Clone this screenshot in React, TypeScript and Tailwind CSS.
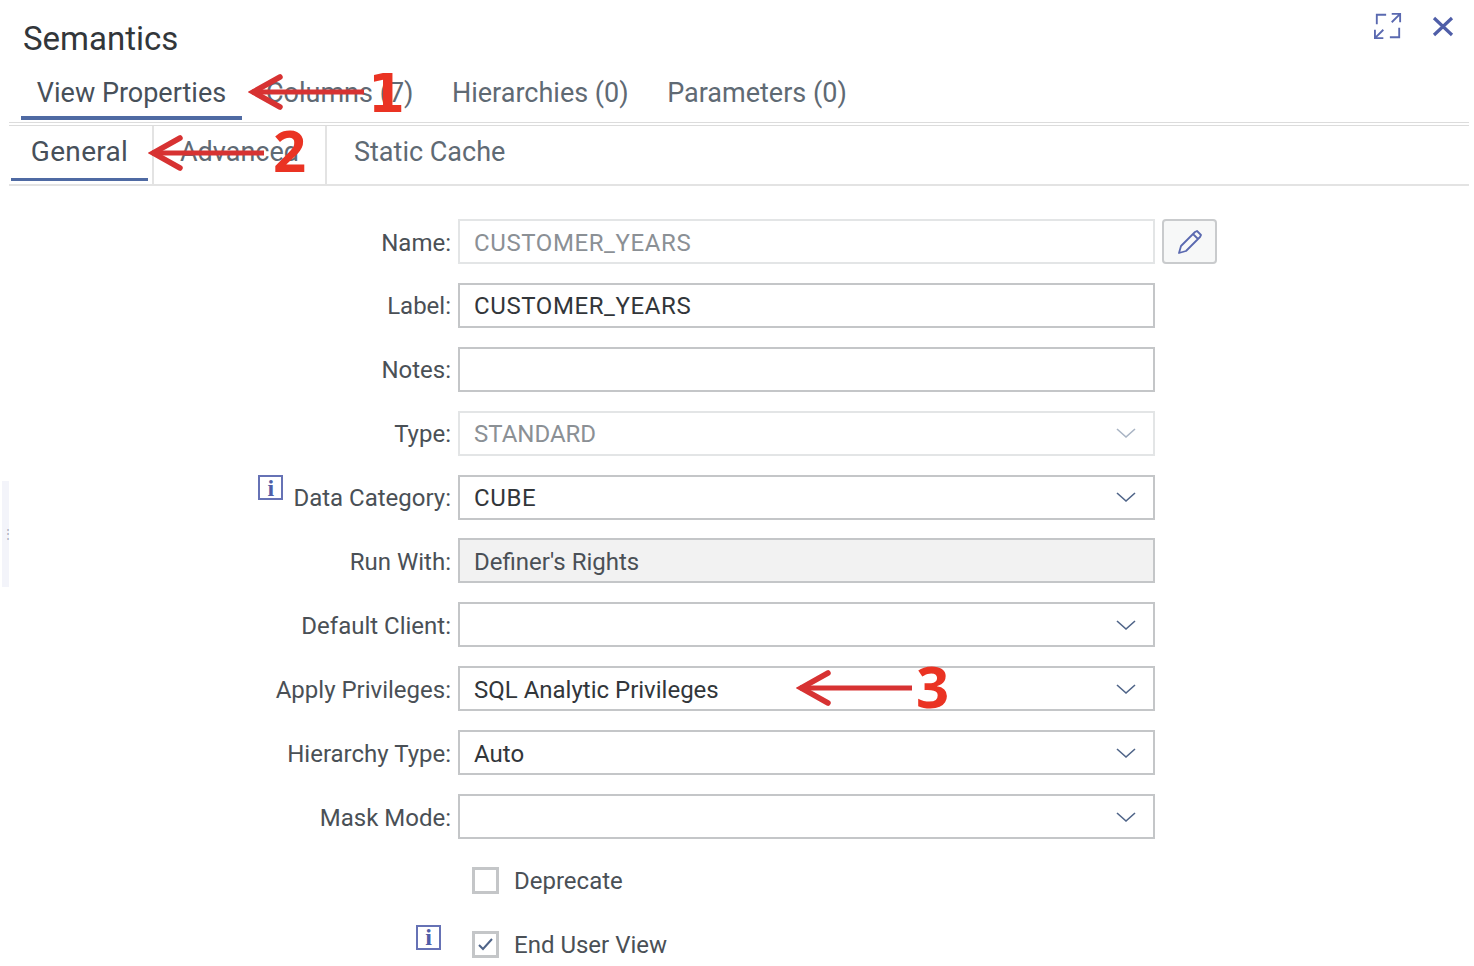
const font = "font-['Roboto',sans-serif]";

function Chevron({ faded }: { faded?: boolean }) {
  return (
    <svg width="22" height="12" viewBox="0 0 22 12" fill="none" className="shrink-0">
      <path d="M2 2 L11 10 L20 2" stroke={faded ? "#a9b4c4" : "#4f6488"} strokeWidth="1.6" />
    </svg>
  );
}

function InfoIcon() {
  return (
    <span className="flex h-[25px] w-[25px] shrink-0 items-center justify-center border-2 border-[#6672b5] font-['Liberation_Serif',serif] text-[24px] leading-none font-bold text-[#4f5ea8]">
      i
    </span>
  );
}

function Arrow({ x, y }: { x: number; y: number }) {
  return (
    <svg
      width="122"
      height="40"
      viewBox="0 0 122 40"
      fill="none"
      className="pointer-events-none absolute"
      style={{ left: x, top: y }}
    >
      <path d="M4 20 H116" stroke="#d73232" strokeWidth="5" />
      <path d="M32 5 L5 20 L32 35" stroke="#d73232" strokeWidth="5.5" strokeLinecap="round" strokeLinejoin="miter" />
    </svg>
  );
}

interface RowProps {
  label: string;
  value?: string;
  kind?: "plain" | "disabled" | "readonly";
  select?: boolean;
  info?: boolean;
  edit?: boolean;
  wide?: boolean;
}

function Row({ label, value, kind = "plain", select, info, edit, wide }: RowProps) {
  const box =
    kind === "disabled"
      ? "border-[#e3e5e6] text-[#8b9095] bg-white"
      : kind === "readonly"
        ? "border-[#c4c6c8] text-[#4a5056] bg-[#f2f2f2]"
        : "border-[#c4c6c8] text-[#32363a] bg-white";
  return (
    <div className="flex h-[45px] items-center">
      <div className="flex w-[451px] shrink-0 justify-end pt-[2px] text-[24px] text-[#4a5056]">
        {info && (
          <span className="mt-[-5px] mr-[10px]">
            <InfoIcon />
          </span>
        )}
        <span>{label}</span>
      </div>
      <div
        className={`ml-[7px] flex h-full w-[697px] shrink-0 items-center justify-between border-2 pr-[16px] pl-[14px] text-[24px] ${box}`}
      >
        <span className={`pt-[2px] ${wide ? "tracking-[0.6px]" : ""}`}>{value}</span>
        {select && <Chevron faded={kind === "disabled"} />}
      </div>
      {edit && (
        <button className="ml-[7px] flex h-[45px] w-[55px] items-center justify-center rounded-[4px] border-2 border-[#c9cbcd] bg-[#f7f8f8]">
          <svg width="26" height="26" viewBox="0 0 26 26" fill="none">
            <path
              d="M2 24 L4 17 L18 3 L20 2 L24 6 L23 8 L9 22 Z M16 5 L21 10"
              stroke="#5a69b0"
              strokeWidth="1.8"
              strokeLinejoin="round"
            />
          </svg>
        </button>
      )}
    </div>
  );
}

function Check({ label, checked, info }: { label: string; checked?: boolean; info?: boolean }) {
  return (
    <div className="flex h-[27px] items-center">
      <div className="flex w-[441px] shrink-0 justify-end">{info && <span className="mt-[-15px]"><InfoIcon /></span>}</div>
      <span className="ml-[31px] flex h-[27px] w-[27px] shrink-0 items-center justify-center border-[3px] border-[#c4c6c8]">
        {checked && (
          <svg width="15" height="13" viewBox="0 0 15 13" fill="none">
            <path d="M1 7 L5 11 L14 1" stroke="#4f6488" strokeWidth="2" />
          </svg>
        )}
      </span>
      <span className="ml-[15px] text-[24px] text-[#4a5056]">{label}</span>
    </div>
  );
}

export default function App() {
  return (
    <div className={`relative h-[966px] w-[1474px] overflow-hidden bg-white ${font}`}>
      {/* sash on the left edge */}
      <div className="absolute top-[481px] left-[2px] flex h-[106px] w-[7px] items-center justify-start bg-[#f3f4fa] text-[12px] leading-none text-[#a9adbd]">
        ⋮
      </div>

      <div className="flex h-[70px] items-start justify-between pr-[20px] pl-[23px]">
        <h1 className="pt-[16px] text-[33px] leading-[46px] text-[#32363a]">Semantics</h1>
        <div className="flex items-center gap-[30px] pt-[12px]">
          <svg width="28" height="28" viewBox="0 0 30 30" fill="none" stroke="#5a69b0" strokeWidth="2">
            <path d="M13 3 H3 V13 M17 27 H27 V17" />
            <path d="M19 2 H28 V11 M28 2 L19 11 M1 19 V28 H10 M1 28 L10 19" />
          </svg>
          <svg width="22" height="22" viewBox="0 0 22 22" fill="none" stroke="#4f5ea8" strokeWidth="3.2">
            <path d="M2 3 L20 20 M20 3 L2 20" />
          </svg>
        </div>
      </div>

      <div className="ml-[9px] w-[1460px]">
        <nav className="flex h-[50px] items-center pl-[12px] text-[27px] text-[#5f6a74]">
          <div className="flex h-full w-[221px] items-center justify-center border-b-[4px] border-[#4f6aa3] text-[#47505a]">
            View Properties
          </div>
          <div className="flex h-full items-center gap-[38.5px] pb-[4px] pl-[24px]">
            <span>Columns (7)</span>
            <span>Hierarchies (0)</span>
            <span>Parameters (0)</span>
          </div>
        </nav>
        <div className="mt-[2px] h-[4px] border-y border-[#dcdcdc]" />
        <nav className="flex h-[60px] border-b-2 border-[#e3e3e3] text-[27px] text-[#5f6a74]">
          <div className="ml-[2px] flex h-[55px] w-[137px] items-center justify-center border-b-[3px] border-[#4f6aa3] text-[28px] tracking-[0.3px] text-[#47505a]">
            General
          </div>
          <div className="ml-[4px] flex w-[175px] items-center justify-center border-x-2 border-[#e3e3e3] pb-[6px]">
            Advanced
          </div>
          <div className="flex items-center pb-[6px] pl-[27px]">Static Cache</div>
        </nav>
      </div>

      <div className="mt-[33px] flex flex-col gap-[18.9px]">
        <Row label="Name:" value="CUSTOMER_YEARS" kind="disabled" edit wide />
        <Row label="Label:" value="CUSTOMER_YEARS" wide />
        <Row label="Notes:" />
        <Row label="Type:" value="STANDARD" kind="disabled" select />
        <Row label="Data Category:" value="CUBE" select info wide />
        <Row label="Run With:" value="Definer's Rights" kind="readonly" />
        <Row label="Default Client:" select />
        <Row label="Apply Privileges:" value="SQL Analytic Privileges" select />
        <Row label="Hierarchy Type:" value="Auto" select />
        <Row label="Mask Mode:" select />
      </div>
      <div className="mt-[28px] flex flex-col gap-[37px]">
        <Check label="Deprecate" />
        <Check label="End User View" checked info />
      </div>

      <Arrow x={248} y={72} />
      <span className="pointer-events-none absolute top-[67px] left-[368px] font-['DejaVu_Sans',sans-serif] text-[53px] leading-none font-bold text-[#ea3323]">
        1
      </span>
      <Arrow x={148} y={133} />
      <span className="pointer-events-none absolute top-[121px] left-[273px] font-['Open_Sans',sans-serif] text-[58px] leading-none font-bold text-[#ea3323]">
        2
      </span>
      <Arrow x={796} y={668} />
      <span className="pointer-events-none absolute top-[657px] left-[916px] font-['Open_Sans',sans-serif] text-[58px] leading-none font-bold text-[#ea3323]">
        3
      </span>
    </div>
  );
}
